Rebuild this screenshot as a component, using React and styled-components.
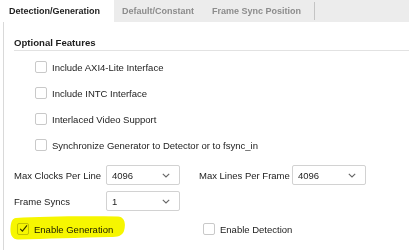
import React from 'react'
import styled, { createGlobalStyle } from 'styled-components'

const GlobalStyle = createGlobalStyle`
  html, body {
    margin: 0;
    padding: 0;
    background: #ffffff;
  }
  body {
    font-family: "Liberation Sans", Arial, sans-serif;
    font-size: 9.5px;
    color: #222222;
  }
`

const Page = styled.div`
  width: 409px;
  height: 250px;
  overflow: hidden;
  background: #ffffff;
`

const TabBar = styled.div`
  display: flex;
  align-items: center;
  height: 22px;
  margin-left: 3px;
  background: #ececec;
`

const Tab = styled.div`
  display: flex;
  align-items: center;
  height: 100%;
  padding: ${p => (p.$active ? '0 14px 0 6px' : `0 9px 0 ${p.$lead || 9}px`)};
  background: ${p => (p.$active ? '#ffffff' : 'transparent')};
  color: ${p => (p.$active ? '#1e1e1e' : '#8c8c8c')};
  font-weight: 700;
  font-size: 9px;
  white-space: nowrap;
`

const TabDivider = styled.div`
  width: 1px;
  height: 18px;
  margin-left: 4px;
  background: #c4c4c4;
`

const Pane = styled.div`
  margin-left: 3px;
  border-left: 1px solid #d9d9d9;
  padding: 15px 0 0 10px;
  height: 213px;
`

const SectionTitle = styled.div`
  font-weight: 700;
  font-size: 9.6px;
  line-height: 11px;
  padding-bottom: 2px;
  border-bottom: 1px solid #e2e2e2;
  color: #1e1e1e;
`

const OptionList = styled.div`
  display: flex;
  flex-direction: column;
  padding: 3px 0 0 21px;
`

const CheckRow = styled.label`
  display: flex;
  align-items: center;
  gap: 5px;
  height: ${p => p.$h || 26}px;
  white-space: nowrap;
  color: #222222;
`

const Box = styled.span`
  position: relative;
  width: 10px;
  height: 10px;
  border: 1px solid #c9c9c9;
  border-radius: 2px;
  background: #ffffff;
  flex-shrink: 0;
`

const Tick = styled.svg`
  position: absolute;
  left: 1px;
  top: 0px;
  width: 9px;
  height: 9px;
`

const FieldGrid = styled.div`
  display: grid;
  grid-template-columns: 92px 74px 19px 93px 74px;
  grid-auto-rows: 20px;
  row-gap: 6px;
  align-items: center;
  margin-top: 7px;
`

const FieldLabel = styled.span`
  grid-column: ${p => p.$col || 'auto'};
  white-space: nowrap;
  color: #222222;
`

const Select = styled.div`
  grid-column: ${p => p.$col};
  display: flex;
  align-items: center;
  justify-content: space-between;
  box-sizing: border-box;
  height: 20px;
  padding: 0 9px 0 5px;
  border: 1px solid #d2d2d2;
  border-radius: 2px;
  background: #ffffff;
  color: #1e1e1e;
`

const Chevron = styled.svg`
  width: 8px;
  height: 5px;
`

const BottomRow = styled.div`
  position: relative;
  display: grid;
  grid-template-columns: 186px auto;
  margin-top: 10px;
  padding-left: 3px;
`

const Highlight = styled.svg`
  position: absolute;
  left: -4px;
  top: -6px;
  width: 116px;
  height: 26px;
  mix-blend-mode: multiply;
  pointer-events: none;
`

const Check = ({ checked, children, h }) => (
  <CheckRow $h={h}>
    <Box>
      {checked && (
        <Tick viewBox="0 0 9 9">
          <polyline points="1.2,4.8 3.4,7.2 8,1.4" fill="none" stroke="#333" strokeWidth="1.1" />
        </Tick>
      )}
    </Box>
    {children}
  </CheckRow>
)

const Dropdown = ({ value, col }) => (
  <Select $col={col}>
    <span>{value}</span>
    <Chevron viewBox="0 0 8 5">
      <polyline points="0.8,0.8 4,4 7.2,0.8" fill="none" stroke="#666" strokeWidth="1.1" />
    </Chevron>
  </Select>
)

export default function App() {
  return (
    <Page>
      <GlobalStyle />
      <TabBar>
        <Tab $active>Detection/Generation</Tab>
        <Tab $lead={8}>Default/Constant</Tab>
        <Tab>Frame Sync Position</Tab>
        <TabDivider />
      </TabBar>
      <Pane>
        <SectionTitle>Optional Features</SectionTitle>
        <OptionList>
          <Check>Include AXI4-Lite Interface</Check>
          <Check>Include INTC Interface</Check>
          <Check>Interlaced Video Support</Check>
          <Check>Synchronize Generator to Detector or to fsync_in</Check>
        </OptionList>
        <FieldGrid>
          <FieldLabel>Max Clocks Per Line</FieldLabel>
          <Dropdown value="4096" col={2} />
          <FieldLabel $col={4}>Max Lines Per Frame</FieldLabel>
          <Dropdown value="4096" col={5} />
          <FieldLabel>Frame Syncs</FieldLabel>
          <Dropdown value="1" col={2} />
        </FieldGrid>
        <BottomRow>
          <Check checked h={16}>Enable Generation</Check>
          <Check h={16}>Enable Detection</Check>
          <Highlight viewBox="0 0 116 26">
            <path
              d="M6 3 C30 1.5 70 1 108 1.5 C115 2 116 9 114 16 C112 21 108 22 100 22 C70 22.5 35 24 8 24.5 C2 24.5 0 19 0.5 13 C1 7 2 3.5 6 3 Z"
              fill="#f6f600"
            />
          </Highlight>
        </BottomRow>
      </Pane>
    </Page>
  )
}
